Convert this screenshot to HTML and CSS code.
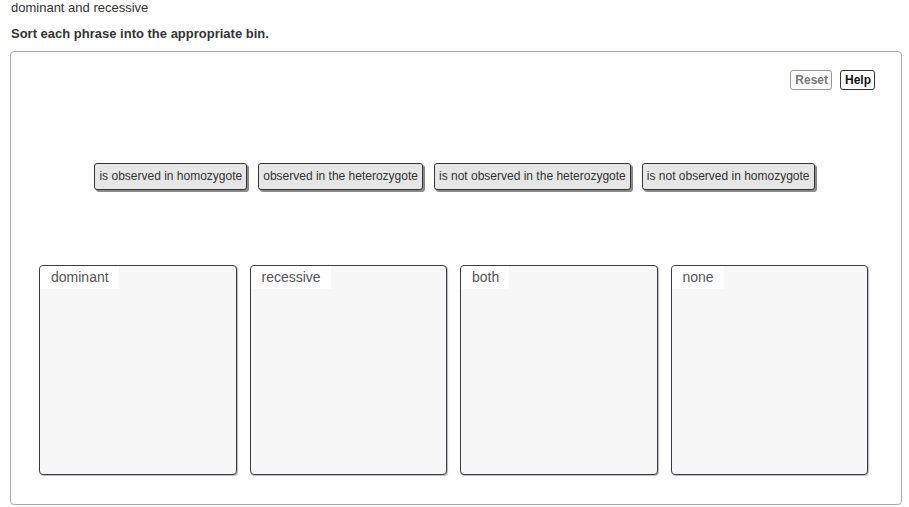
FILE: index.html
```html
<!DOCTYPE html>
<html lang="en">
<head>
    <meta charset="UTF-8">
    <meta name="viewport" content="width=device-width, initial-scale=1.0">
    <title>dominant and recessive</title>
    <link rel="stylesheet" href="styles.css">
</head>
<body>
    <div class="title">dominant and recessive</div>
    <div class="instructions">Sort each phrase into the appropriate bin.</div>

    <div class="panel">
        <div class="toolbar">
            <button class="tool reset">Reset</button>
            <button class="tool help">Help</button>
        </div>

        <div class="chips">
            <div class="chip">is observed in homozygote</div>
            <div class="chip">observed in the heterozygote</div>
            <div class="chip">is not observed in the heterozygote</div>
            <div class="chip">is not observed in homozygote</div>
        </div>

        <div class="bins">
            <div class="bin"><span class="bin-label">dominant</span></div>
            <div class="bin"><span class="bin-label">recessive</span></div>
            <div class="bin"><span class="bin-label">both</span></div>
            <div class="bin"><span class="bin-label">none</span></div>
        </div>
    </div>
</body>
</html>
```

FILE: styles.css
```css
body {
    margin: 0;
    padding: 0 7px 0 10px;
    background-color: #fff;
    color: #333;
    font-family: "Liberation Sans", Arial, sans-serif;
}
.title {
    font-size: 13px;
    line-height: 16px;
    padding: 0 0 0 1px;
}
.instructions {
    font-size: 13px;
    font-weight: bold;
    line-height: 16px;
    margin-top: 10px;
    padding-left: 1px;
}
.panel {
    margin-top: 9px;
    height: 406px;
    border: 1px solid #aaa;
    border-radius: 4px;
    padding: 18px 26px 28px 28px;
}
.toolbar {
    display: flex;
    justify-content: flex-end;
    gap: 8px;
}
.tool {
    font-family: "Liberation Sans", Arial, sans-serif;
    font-size: 12px;
    font-weight: bold;
    height: 20px;
    padding: 0 3px 0 4px;
    background-color: #fff;
    border-radius: 3px;
    cursor: pointer;
}
.tool.reset {
    border: 1px solid #999;
    color: #777;
}
.tool.help {
    border: 1px solid #333;
    color: #111;
}
.chips {
    display: flex;
    justify-content: center;
    gap: 11px;
    margin-top: 73px;
    padding-right: 5px;
}
.chip {
    font-size: 12px;
    line-height: 25px;
    padding: 0 4px;
    background-color: #e6e6e6;
    border: 1px solid #333;
    border-radius: 3px;
    box-shadow: 2px 2px 0 #8a8a8a;
    color: #333;
}
.bins {
    display: flex;
    justify-content: center;
    gap: 13px;
    margin-top: 75px;
    padding-right: 7px;
}
.bin {
    width: 196px;
    height: 208px;
    background-color: #f7f7f7;
    border: 1px solid #3a3a45;
    border-radius: 4px;
    box-shadow: 1px 1px 1px #bbb;
}
.bin-label {
    display: inline-block;
    background-color: #fff;
    color: #555;
    font-size: 14px;
    line-height: 23px;
    padding: 0 10px 0 11px;
    border-top-left-radius: 4px;
}
```
